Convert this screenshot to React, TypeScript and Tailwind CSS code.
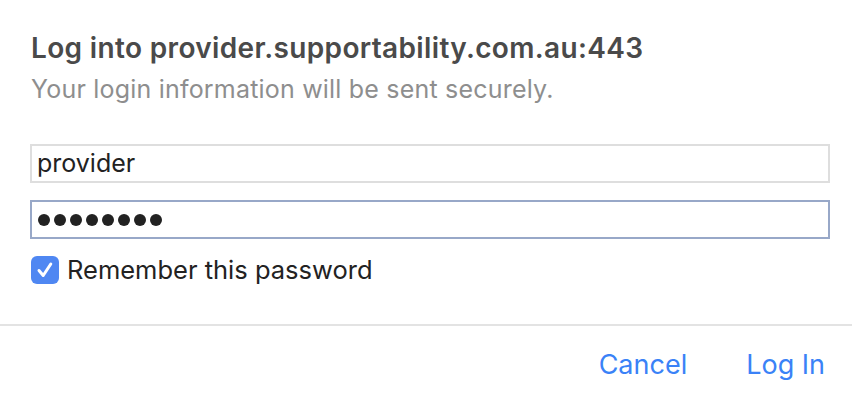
import React from "react";

export default function App() {
  return (
    <div
      className="w-[852px] h-[396px] bg-white flex flex-col overflow-hidden"
      style={{ fontFamily: "Inter, 'Noto Sans', sans-serif" }}
    >
      <div className="pl-[30px] pr-[22px] pt-[31px] flex flex-col">
        <div className="text-[28px] leading-[34px] font-semibold text-[#4a4a4a] pl-[1px] tracking-[0.35px]">
          Log into provider.supportability.com.au:443
        </div>
        <div className="text-[25px] leading-[30px] text-[#8e8e8e] mt-[9px] pl-[1px] tracking-[0.2px]">
          Your login information will be sent securely.
        </div>
        <div className="mt-[40px] h-[39px] border-2 border-[#dedede] flex items-center px-[5px] text-[25px] text-[#222222]">
          provider
        </div>
        <div className="mt-[17px] h-[39px] border-2 border-[#98a8c8] flex items-center px-[6px] gap-[4px]">
          {Array.from({ length: 8 }).map((_, i) => (
            <span key={i} className="w-[12px] h-[12px] rounded-full bg-[#222222]" />
          ))}
        </div>
        <div className="mt-[17px] flex items-center gap-[8px] pl-[1px] h-[28px]">
          <span className="w-[28px] h-[28px] rounded-[6px] bg-[#4f87f2] flex items-center justify-center">
            <svg width="22" height="22" viewBox="0 0 22 22" fill="none">
              <path d="M5 11.5 L9.2 16.5 L16.8 5" stroke="white" strokeWidth="3" strokeLinecap="round" strokeLinejoin="round" />
            </svg>
          </span>
          <span className="text-[25.5px] leading-[28px] text-[#222222]">Remember this password</span>
        </div>
      </div>
      <div className="mt-[40px] h-[2px] bg-[#e3e3e3]" />
      <div className="flex justify-end items-center gap-[59px] pr-[27px] mt-[23px]">
        <span className="text-[27px] leading-[32px] text-[#3a82f7]">Cancel</span>
        <span className="text-[27px] leading-[32px] text-[#3a82f7]">Log In</span>
      </div>
    </div>
  );
}
